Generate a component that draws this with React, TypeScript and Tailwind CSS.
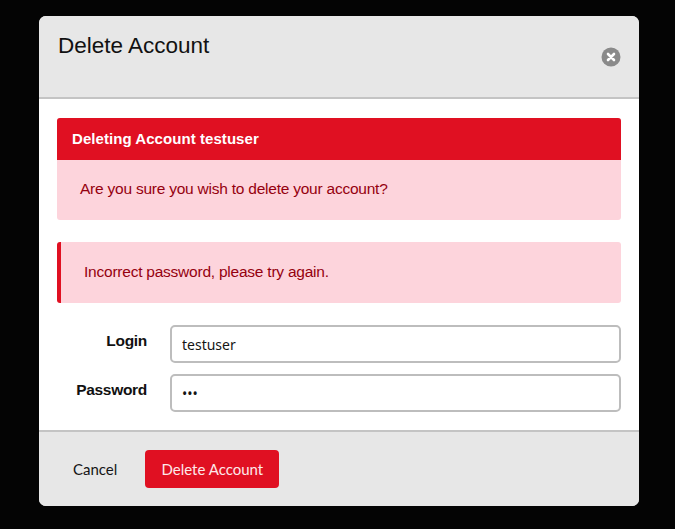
const sans = "font-['Liberation_Sans',Arial,sans-serif]";

function CloseIcon() {
  return (
    <svg width="20" height="20" viewBox="0 0 20 20" className="block">
      <circle cx="10" cy="10" r="9.5" fill="#8a8a8a" />
      <path d="M7 7l6 6M13 7l-6 6" stroke="#fff" strokeWidth="2.6" strokeLinecap="round" />
    </svg>
  );
}

function Field({ label, value, type }: { label: string; value: string; type: string }) {
  return (
    <div className="flex items-start">
      <label className={`w-[90px] pt-[4px] text-right text-[15.5px] leading-[24px] font-bold tracking-[-0.3px] text-[#111111] ${sans}`}>
        {label}
      </label>
      <input
        readOnly
        type={type}
        value={value}
        className="ml-[23px] h-[38px] w-[451px] rounded-[5px] border-2 border-[#bdbdbd] bg-white px-[10px] font-['Noto_Sans',sans-serif] text-[14px] text-[#151515] outline-none"
      />
    </div>
  );
}

export default function App() {
  return (
    <div className="flex h-[529px] w-[675px] flex-col overflow-hidden bg-[#040404] pl-[39px] pt-[16px]">
      <div className="flex h-[490px] w-[600px] flex-col overflow-hidden rounded-[7px] bg-white">
        {/* Header */}
        <div className="flex h-[83px] justify-between border-b-2 border-[#c4c4c4] bg-[#e7e7e7] pl-[19px] pr-[18px]">
          <h1 className={`pt-[14px] text-[22.5px] leading-[32px] text-[#111111] ${sans}`}>Delete Account</h1>
          <div className="pt-[31px]">
            <CloseIcon />
          </div>
        </div>

        {/* Body */}
        <div className="flex flex-1 flex-col px-[18px] pt-[19px]">
          <div className="overflow-hidden rounded-[3px] bg-[#fdd4dc]">
            <div className={`flex h-[42px] items-center bg-[#e01022] px-[15px] text-[15px] font-bold tracking-[0.06px] text-white ${sans}`}>
              Deleting Account testuser
            </div>
            <p className={`h-[60px] px-[23px] pt-[17px] text-[15.5px] leading-[24px] tracking-[-0.23px] text-[#95000f] ${sans}`}>
              Are you sure you wish to delete your account?
            </p>
          </div>

          <div className="mt-[22px] flex h-[61px] items-center rounded-[3px] border-l-4 border-[#e01022] bg-[#fdd4dc] pl-[23px]">
            <p className={`mb-[2px] text-[15.5px] leading-[24px] tracking-[-0.23px] text-[#95000f] ${sans}`}>Incorrect password, please try again.</p>
          </div>

          <div className="mt-[22px] flex flex-col gap-[11px]">
            <Field label="Login" value="testuser" type="text" />
            <Field label="Password" value="abc" type="password" />
          </div>
        </div>

        {/* Footer */}
        <div className="flex h-[76px] items-center gap-[28px] border-t-2 border-[#c4c4c4] bg-[#e7e7e7] pl-[34px] font-['Lato',sans-serif] text-[15px]">
          <button className="text-[#151515]">Cancel</button>
          <button className="h-[38px] w-[134px] rounded-[4px] bg-[#e01022] text-[#fde8ea]">Delete Account</button>
        </div>
      </div>
    </div>
  );
}
